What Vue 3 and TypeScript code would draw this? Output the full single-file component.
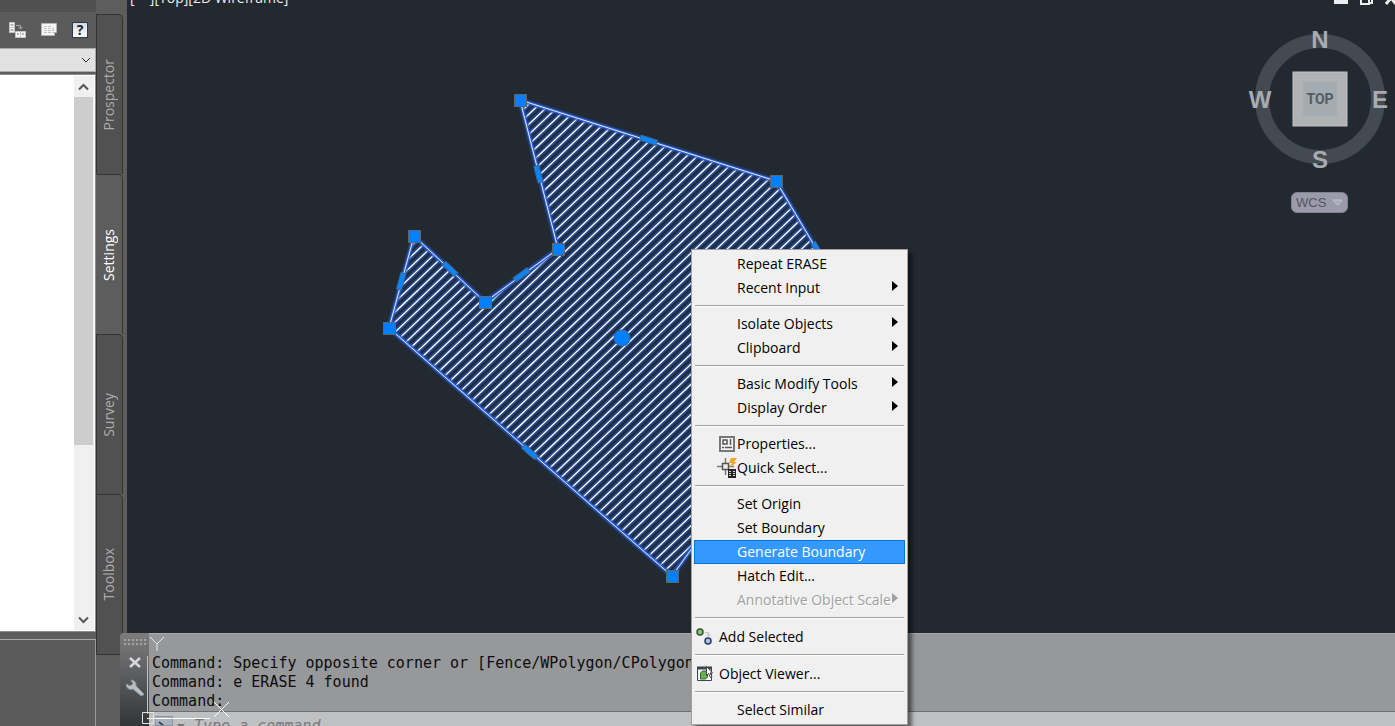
<script setup lang="ts">
import { ref } from 'vue'

interface MenuItem {
  label: string
  submenu?: boolean
  disabled?: boolean
  active?: boolean
  icon?: 'properties' | 'quick' | 'add' | 'viewer'
  wide?: boolean
}

const menuGroups: MenuItem[][] = [
  [{ label: 'Repeat ERASE' }, { label: 'Recent Input', submenu: true }],
  [{ label: 'Isolate Objects', submenu: true }, { label: 'Clipboard', submenu: true }],
  [{ label: 'Basic Modify Tools', submenu: true }, { label: 'Display Order', submenu: true }],
  [{ label: 'Properties...', icon: 'properties' }, { label: 'Quick Select...', icon: 'quick' }],
  [
    { label: 'Set Origin' },
    { label: 'Set Boundary' },
    { label: 'Generate Boundary', active: true },
    { label: 'Hatch Edit...' },
    { label: 'Annotative Object Scale', submenu: true, disabled: true },
  ],
  [{ label: 'Add Selected', icon: 'add', wide: true }],
  [{ label: 'Object Viewer...', icon: 'viewer', wide: true }],
  [{ label: 'Select Similar' }],
]

const tabs = ['Prospector', 'Settings', 'Survey', 'Toolbox']
const activeTab = ref('Settings')
const command = ref('')

const history = [
  'Command: Specify opposite corner or [Fence/WPolygon/CPolygon]:',
  'Command: e ERASE 4 found',
  'Command:',
]

type Point = [number, number]
const vertices: Point[] = [
  [393, 100], [649, 181], [731, 319], [545, 576], [262, 328], [287, 236], [358, 302], [431, 249],
]
const outline = vertices.map((p) => p.join(',')).join(' ')

const grips = vertices.map(([x1, y1], i) => {
  const [x2, y2] = vertices[(i + 1) % vertices.length]
  const angle = (Math.atan2(y2 - y1, x2 - x1) * 180) / Math.PI
  return { x: (x1 + x2) / 2, y: (y1 + y2) / 2, angle }
})

const slope = 0.95
const pitch = 10.1
const base = 570 + slope * 538.7
const hatch: string = Array.from({ length: 90 }, (_, i) => {
  const c = base + (i - 75) * pitch
  return `M240 ${(c - slope * 240).toFixed(2)}L760 ${(c - slope * 760).toFixed(2)}`
}).join('')
</script>

<template>
  <div class="app">
    <aside class="palette">
      <div class="palette-main">
        <div class="title-strip"></div>
        <div class="toolbar">
          <button class="tool" aria-label="Item view">
            <svg width="18" height="18" viewBox="0 0 18 18">
              <path d="M1.500 1.500h5v5h-5zM1.500 6.500h5v5h-5zM7.500 10.500h5v6h-5zM12.500 10.500h5v6h-5z" fill="#f6f6f6" stroke="#c4c4c4" />
              <path d="M2.500 4h3M2.500 9h3M9 13h2M14 13h2" stroke="#777" />
              <path d="M8 4.500h4.500v3M10.500 6l2 2 2-2" fill="none" stroke="#aaa" />
            </svg>
          </button>
          <button class="tool" aria-label="Panorama">
            <svg width="18" height="18" viewBox="0 0 18 18">
              <path d="M1.500 2.500h15v9h-2v3h-13z" fill="#f4f4f4" stroke="#b4b4b4" />
              <path d="M4 5.500h7M4 7.500h9M4 9.500h9M4 11.500h9M13.500 7v5" stroke="#c2c2c2" stroke-dasharray="3 1" />
            </svg>
          </button>
          <button class="tool help" aria-label="Help">?</button>
        </div>
        <div class="combo">
          <select aria-label="View"><option></option></select>
          <svg width="10" height="7" viewBox="0 0 10 7"><path d="M1 1l4 4 4-4" fill="none" stroke="#333" /></svg>
        </div>
        <div class="list">
          <div class="scrollbar">
            <button aria-label="Scroll up">
              <svg width="11" height="8" viewBox="0 0 11 8"><path d="M1 6.500l4.500-4.500L10 6.500" fill="none" stroke="#555" stroke-width="2" /></svg>
            </button>
            <div class="track"><div class="thumb"></div></div>
            <button aria-label="Scroll down">
              <svg width="11" height="8" viewBox="0 0 11 8"><path d="M1 1.500L5.500 6 10 1.500" fill="none" stroke="#555" stroke-width="2" /></svg>
            </button>
          </div>
        </div>
        <div class="preview"></div>
      </div>
      <nav class="tabs">
        <button v-for="t in tabs" :key="t" class="tab" :class="{ on: t === activeTab }" @click="activeTab = t">
          <span>{{ t }}</span>
        </button>
      </nav>
    </aside>

    <main class="viewport">
      <div class="view-label">[ − ][Top][2D Wireframe]</div>
      <svg class="drawing" width="860" height="640" viewBox="0 0 860 640">
        <defs>
          <clipPath id="region"><polygon :points="outline" /></clipPath>
        </defs>
        <g clip-path="url(#region)" fill="none">
          <path :d="hatch" stroke="#213d75" stroke-width="6" opacity=".6" />
          <path :d="hatch" stroke="#2c55ab" stroke-width="4" opacity=".7" />
          <path :d="hatch" stroke="#fff" stroke-width="1.300" />
        </g>
        <polygon :points="outline" fill="none" stroke="#2450b4" stroke-width="6" opacity=".45" />
        <polygon :points="outline" fill="none" stroke="#2e60d2" stroke-width="3" />
        <polygon :points="outline" fill="none" stroke="#e4ebff" stroke-width="1" />
        <rect
          v-for="(g, i) in grips" :key="'m' + i" x="-8" y="-3" width="17" height="5"
          :transform="`translate(${g.x} ${g.y}) rotate(${g.angle})`" fill="#0a84ff" stroke="#3f6990"
        />
        <rect
          v-for="(v, i) in vertices" :key="'v' + i" :x="v[0] - 5.5" :y="v[1] - 5.5" width="12" height="12"
          fill="#0080ff" stroke="#5d6670"
        />
        <circle cx="495" cy="338" r="8" fill="#0080ff" stroke="#3f6990" />
      </svg>

      <div class="window-controls">
        <button aria-label="Minimize"><svg width="14" height="5" viewBox="0 0 14 5"><path d="M0 0h14v4H0z" fill="#eee" /></svg></button>
        <button aria-label="Restore"><svg width="13" height="5" viewBox="0 0 13 5"><path d="M1 0v4h8V0M9 3h3V0" fill="none" stroke="#eee" stroke-width="2" /></svg></button>
        <button aria-label="Close"><svg width="10" height="5" viewBox="0 0 10 5"><path d="M6-2L1 4M6-2l5 6" fill="none" stroke="#eee" stroke-width="3" /></svg></button>
      </div>

      <div class="cube">
        <svg width="150" height="150" viewBox="-6 0 150 150">
          <circle cx="69" cy="73" r="58" fill="none" stroke="#434a52" stroke-width="14" />
          <rect x="42" y="46" width="54" height="54" fill="#b1b2b4" stroke="#c1c2c3" />
          <rect x="52" y="56" width="34" height="34" fill="#a4acb2" />
          <g class="points">
            <text x="69" y="22">N</text>
            <text x="69" y="142">S</text>
            <text x="9" y="82">W</text>
            <text x="129" y="82">E</text>
          </g>
          <text class="top" x="69" y="78">TOP</text>
        </svg>
      </div>
      <button class="wcs">
        WCS
        <svg width="11" height="7" viewBox="0 0 11 7"><path d="M1 1h9L5.500 6z" fill="#a7a7b5" stroke="#c6c6d0" /></svg>
      </button>
    </main>

    <section class="console">
      <div class="console-side">
        <svg width="22" height="7" viewBox="0 0 22 7"><path d="M0 1h22M0 5h22" stroke="#a6a6a6" stroke-width="2" stroke-dasharray="2 2" /></svg>
        <button aria-label="Close command line">
          <svg width="12" height="11" viewBox="0 0 12 11"><path d="M1 1l10 9M11 1L1 10" stroke="#d6d8da" stroke-width="2.500" /></svg>
        </button>
        <button aria-label="Customize">
          <svg width="18" height="18" viewBox="0 0 18 18">
            <path d="M5 1a5 5 0 0 1 5 6l7 7c2 2-1 4-3 2L7 10A5 5 0 0 1 0 5l4 2 3-2z" fill="#b9c0c8" stroke="#8b939c" />
          </svg>
        </button>
      </div>
      <div class="console-body">
        <div class="history"><p v-for="line in history" :key="line">{{ line }}</p></div>
        <label class="prompt">
          <span class="prompt-icon">
            <svg width="18" height="14" viewBox="0 0 18 14"><path d="M3 5l6 5-6 4" fill="none" stroke="#3e4c60" stroke-width="2" /></svg>
          </span>
          <svg width="8" height="5" viewBox="0 0 8 5"><path d="M0 0h8L4 5z" fill="#777" /></svg>
          <input v-model="command" type="text" aria-label="Command" placeholder="Type a command" />
        </label>
      </div>
    </section>

    <svg class="ucs" width="100" height="96" viewBox="0 0 100 96" fill="none">
      <path d="M10 7l7 7 7-7M17 14v7" stroke="#e8e8e8" />
      <path d="M7.500 26v58" stroke="#c4c4c4" />
      <path d="M2.500 82.500h11v11h-11z" stroke="#e2e2e2" />
      <path d="M7 88.500h63" stroke="#fff" />
      <path d="M74 72l15 15M89 72L74 87" stroke="#fff" />
    </svg>

    <div class="menu" role="menu">
      <div v-for="(group, gi) in menuGroups" :key="gi" class="group" role="group">
        <button
          v-for="item in group" :key="item.label" role="menuitem" class="item"
          :class="{ active: item.active, wide: item.wide }" :disabled="item.disabled"
        >
          <span class="icon">
            <svg v-if="item.icon === 'properties'" width="18" height="18" viewBox="0 0 18 18">
              <path d="M2 2h14v14H2z" fill="#f4f4f4" stroke="#777" stroke-width="2" />
              <path d="M5 5h4v4H5z" fill="none" stroke="#555" stroke-width="1.500" />
              <path d="M12.500 4v6M4 12.500h2M7 12.500h7" fill="none" stroke="#555" stroke-width="1.500" />
            </svg>
            <svg v-else-if="item.icon === 'quick'" width="20" height="20" viewBox="0 0 20 20">
              <path d="M0 8.500h17M8.500 0v17" stroke="#777" stroke-width="1.500" />
              <path d="M5.500 5.500h6v6h-6z" fill="#eee" stroke="#555" stroke-width="1.500" />
              <path d="M14 0h6l-3 4h3l-8 6 3-5h-3z" fill="#f5a623" />
              <path d="M11 11h8v9h-8z" fill="#222" />
              <path d="M12 13.500h2M16 13.500h2M12 15.500h2M16 15.500h2M12 17.500h2M16 17.500h2" stroke="#ddd" />
            </svg>
            <svg v-else-if="item.icon === 'add'" width="18" height="18" viewBox="0 0 18 18">
              <circle cx="4" cy="4" r="3" fill="#8fc47a" stroke="#33592c" stroke-width="1.500" />
              <circle cx="12" cy="13" r="3" fill="#a8c4ee" stroke="#263d63" stroke-width="1.500" />
              <path d="M9 4.500h3.500v4M10.500 6l2 2 2-2" fill="none" stroke="#c3c3c3" />
            </svg>
            <svg v-else-if="item.icon === 'viewer'" width="18" height="18" viewBox="0 0 18 18">
              <path d="M1.500 2.500h14v13h-14z" fill="#f7f7f7" stroke="#3c4450" />
              <path d="M1 3h15" stroke="#3c4450" stroke-width="3" />
              <path d="M4.500 8l2-2h5v6l-2 2h-5z" fill="#6fae58" stroke="#2f6d20" />
              <path d="M10.500 1.500v9l2-2 2 4 1.500-1-2-3.500h2.500z" fill="#fff" stroke="#444" />
            </svg>
          </span>
          <span class="label">{{ item.label }}</span>
          <svg v-if="item.submenu" class="arrow" width="6" height="10" viewBox="0 0 6 10"><path d="M0 0l6 5-6 5z" fill="currentColor" /></svg>
        </button>
      </div>
    </div>
  </div>
</template>

<style>
html, body, #app { height: 100%; }
body { overflow: hidden; }
</style>

<style scoped>
* { box-sizing: border-box; }
button { font: inherit; color: inherit; background: none; border: 0; padding: 0; margin: 0; }
svg { display: block; flex: none; }

.app {
  position: relative;
  display: flex;
  height: 100%;
  overflow: hidden;
  background: #222930;
  color: #eee;
  font-family: "Open Sans", "Noto Sans", sans-serif;
  font-size: 14px;
}

.palette { display: flex; width: 127px; flex: none; background: #5d5d5d; }
.palette-main { display: flex; flex-direction: column; width: 96px; }
.title-strip { height: 12px; background: #505050; }
.toolbar { display: flex; align-items: center; justify-content: space-between; height: 36px; padding: 0 8px; background: #5b5b5b; }
.tool { width: 18px; height: 18px; }
.tool.help {
  width: 16px; height: 16px; border: 1px solid #2f3a4c; background: linear-gradient(#d2dae6, #fff);
  color: #222; font-weight: 700; font-size: 14px; line-height: 14px;
}
.combo { position: relative; height: 24px; border: 1px solid #aaa; border-left: 0; background: #e1e1e1; }
.combo select { width: 100%; height: 100%; border: 0; background: transparent; appearance: none; }
.combo svg { position: absolute; right: 4px; top: 8px; pointer-events: none; }
.list { display: flex; justify-content: flex-end; flex: 1; margin-top: 2px; padding: 1px 1px 1px 0; border: 1px solid #8a8a8f; border-left: 0; background: #fff; }
.scrollbar { display: flex; flex-direction: column; width: 20px; background: #f0f0f0; }
.scrollbar button { display: flex; align-items: center; justify-content: center; width: 19px; height: 21px; }
.track { flex: 1; }
.thumb { width: 19px; height: 68%; background: #cdcdcd; }
.preview { height: 87px; margin-top: 7px; border-top: 1px solid #aaa; border-right: 1px solid #999; background: #5b5b5b; }

.tabs { width: 27px; padding-top: 14px; }
.tab {
  display: flex; align-items: center; justify-content: center; width: 27px; height: 160px; padding-right: 2px;
  border: 1px solid #343434; border-bottom: 0; border-radius: 0 5px 0 0; background: #515151; color: #adadad;
}
.tab:last-child { height: 161px; border-bottom: 1px solid #343434; }
.tab.on { background: #5d5d5d; color: #fff; border-left-color: #5d5d5d; }
.tab span { writing-mode: vertical-rl; transform: rotate(180deg); line-height: 20px; }

.viewport { position: relative; flex: 1; overflow: hidden; }
.view-label { position: absolute; left: 3px; top: -12px; line-height: 20px; white-space: pre; font-size: 14px; }
.drawing { position: absolute; left: 0; top: 0; }
.window-controls { position: absolute; top: 0; right: 0; display: flex; gap: 12px; }
.cube { position: absolute; top: 26px; right: 0; width: 150px; }
.points text { font: bold 24px "Liberation Sans", Arial, sans-serif; fill: #a9abae; text-anchor: middle; }
.top { font: bold 14px "Roboto", sans-serif; fill: #525b64; text-anchor: middle; }
.wcs {
  position: absolute; top: 192px; right: 47px; display: flex; align-items: center; justify-content: space-between;
  width: 57px; height: 21px; padding: 0 4px; border: 1px solid #82828f; border-radius: 6px; background: #9b9bab;
  color: #555560; font-family: "Liberation Sans", Arial, sans-serif; font-size: 13px;
}

.console { position: absolute; left: 120px; right: 0; bottom: 0; height: 93px; display: flex; }
.console-side {
  display: flex; flex-direction: column; align-items: center; gap: 11px; width: 29px; padding-top: 6px;
  border-radius: 4px 0 0 0; background: linear-gradient(#7d7d7d, #58595b 50%, #333537);
}
.console-body { display: flex; flex-direction: column; flex: 1; font-family: "DejaVu Sans Mono", monospace; font-size: 15px; color: #0c0c0c; }
.history { height: 78px; padding: 20px 3px 0; border-top: 1px solid #a9abad; background: #97989a; }
.history p { margin: 0; line-height: 19px; white-space: pre; }
.prompt { display: flex; gap: 4px; height: 15px; padding-left: 6px; border-top: 1px solid #6f7072; background: #bfc0c2; overflow: hidden; }
.prompt-icon { width: 18px; margin-top: 4px; border: 1px solid #8b95a5; background: #abb2bd; overflow: hidden; }
.prompt > svg { margin-top: 12px; }
.prompt input { flex: 1; height: 24px; padding: 3px 0 0 5px; border: 0; outline: 0; background: transparent; font: inherit; font-style: italic; }
.prompt input::placeholder { color: #77797b; opacity: 1; }

.ucs { position: absolute; left: 140px; bottom: 0; pointer-events: none; }

.menu {
  position: absolute; left: 691px; top: 249px; width: 217px; padding: 2px; border: 1px solid #a0a0a0;
  background: #f0f0f0; box-shadow: 4px 4px 4px rgba(0, 0, 0, .5); color: #000;
}
.group + .group { padding-top: 12px; position: relative; }
.group + .group::before {
  content: ""; position: absolute; left: 1px; right: 1px; top: 5px; height: 1px;
  background: #a0a0a0; border-bottom: 1px solid #fff; background-clip: padding-box;
}
.item { display: flex; align-items: center; width: 100%; height: 24px; padding: 0 6px 0 22px; border: 1px solid transparent; text-align: left; }
.item.wide { height: 25px; padding-left: 1px; }
.icon { display: flex; align-items: center; justify-content: center; width: 20px; }
.wide .icon { width: 18px; margin-right: 5px; }
.label { flex: 1; line-height: 22px; white-space: nowrap; }
.arrow { margin-bottom: 4px; }
.item.active { background: #3399ff; border-color: #0078d7; color: #fff; }
.item:disabled { color: #a0a0a0; text-shadow: 1px 1px #fff; }
.item:disabled .label { width: 0; }
</style>
